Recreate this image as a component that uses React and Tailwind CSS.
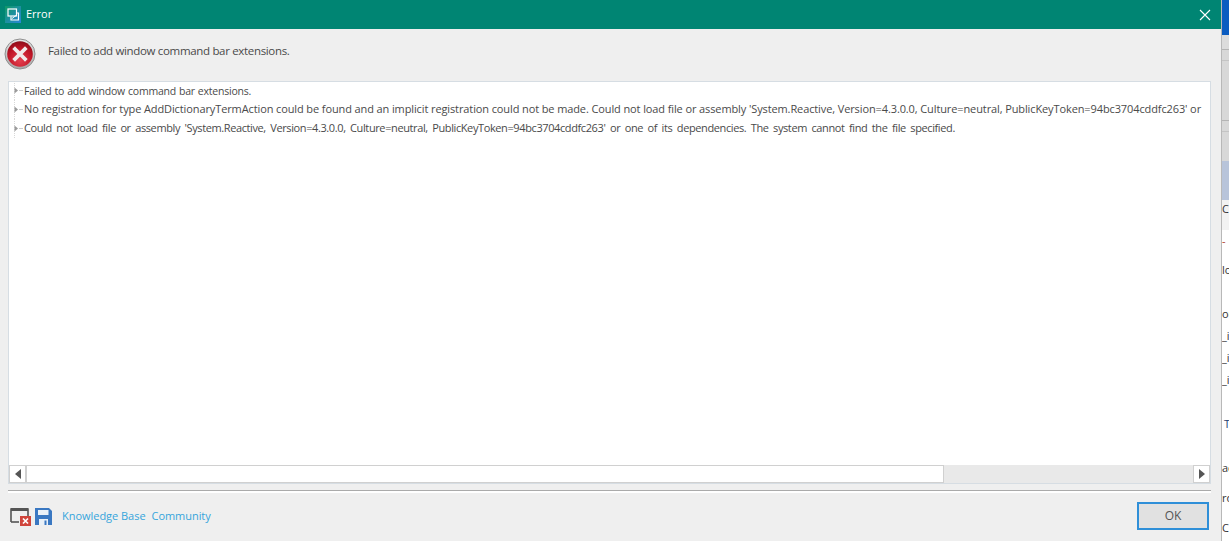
import React from "react";

const FONT = "[font-family:'Open_Sans','Noto_Sans',sans-serif]";

const ROWS = [
  { text: "Failed to add window command bar extensions.", cls: "mt-[2px] text-[10.5px] tracking-[-0.22px] [word-spacing:0.5px]" },
  {
    text: "No registration for type AddDictionaryTermAction could be found and an implicit registration could not be made. Could not load file or assembly 'System.Reactive, Version=4.3.0.0, Culture=neutral, PublicKeyToken=94bc3704cddfc263' or",
    cls: "text-[11px] tracking-[-0.11px]",
  },
  {
    text: "Could not load file or assembly 'System.Reactive, Version=4.3.0.0, Culture=neutral, PublicKeyToken=94bc3704cddfc263' or one of its dependencies. The system cannot find the file specified.",
    cls: "text-[11px] tracking-[-0.39px] [word-spacing:2px]",
  },
];

// slice of the app behind the dialog
const STRIP = [
  { h: "h-[35px]", bg: "bg-[#0b5cc0]" },
  { h: "h-[14px]", bg: "bg-[#dcdcdc]" },
  { h: "h-[11px]", bg: "bg-[#d8d8d8] border-t border-[#b4b4b4]" },
  { h: "h-[60px]", bg: "bg-[#d8d8d8] border-t border-[#c4c4c4]" },
  { h: "h-[11px]", bg: "bg-[#d8d8d8] border-t border-[#b4b4b4]" },
  { h: "h-[30px]", bg: "bg-[#d8d8d8] border-t border-[#c4c4c4]" },
  { h: "h-[39px]", bg: "bg-[#b8c4da]" },
  { h: "h-[16px]", bg: "bg-[#f2f2f2]", t: "C", c: "text-[#333]" },
  { h: "h-[14px]", bg: "bg-[#f2f2f2]" },
  { h: "h-[20px]", bg: "bg-white", t: "-", c: "text-[#b04030]" },
  { h: "h-[9px]", bg: "bg-white" },
  { h: "h-[20px]", bg: "bg-white", t: "lo", c: "text-[#333]" },
  { h: "h-[24px]", bg: "bg-white" },
  { h: "h-[21px]", bg: "bg-white", t: "ou", c: "text-[#333]" },
  { h: "h-[22px]", bg: "bg-white", t: "_ic", c: "text-[#333]" },
  { h: "h-[22px]", bg: "bg-white", t: "_ic", c: "text-[#333]" },
  { h: "h-[22px]", bg: "bg-white", t: "_ic", c: "text-[#333]" },
  { h: "h-[23px]", bg: "bg-white" },
  { h: "h-[20px]", bg: "bg-white", t: "T", c: "text-[#1c3f73] pl-[2px]" },
  { h: "h-[24px]", bg: "bg-white" },
  { h: "h-[20px]", bg: "bg-white", t: "ac", c: "text-[#333]" },
  { h: "h-[10px]", bg: "bg-white" },
  { h: "h-[20px]", bg: "bg-white", t: "rd", c: "text-[#333]" },
  { h: "h-[10px]", bg: "bg-white" },
  { h: "h-[20px]", bg: "bg-white", t: "C", c: "text-[#333]" },
  { h: "h-[4px]", bg: "bg-white" },
];

const AppIcon = () => (
  <svg width="16" height="17" viewBox="0 0 16 17" className="shrink-0">
    <defs>
      <linearGradient id="ai" x1="0" y1="0" x2="1" y2="1">
        <stop offset="0" stopColor="#0f9a66" />
        <stop offset="1" stopColor="#2a86d8" />
      </linearGradient>
    </defs>
    <rect width="16" height="17" fill="url(#ai)" />
    <rect x="3" y="3" width="8.5" height="7" fill="none" stroke="#fff" strokeWidth="1.2" />
    <path d="M6 10.5v3.5h7.5v-7h-2" fill="none" stroke="#fff" strokeWidth="1.2" />
    <path d="M7 12.5l4-3" stroke="#fff" strokeWidth="1" />
  </svg>
);

const ErrorIcon = () => (
  <svg width="32" height="32" viewBox="0 0 32 32" className="shrink-0">
    <defs>
      <radialGradient id="er" cx="0.5" cy="0.75" r="0.75">
        <stop offset="0" stopColor="#e4404f" />
        <stop offset="0.65" stopColor="#bf1526" />
        <stop offset="1" stopColor="#8c0d1a" />
      </radialGradient>
      <linearGradient id="ring" x1="0" y1="0" x2="0" y2="1">
        <stop offset="0" stopColor="#e6e6e6" />
        <stop offset="1" stopColor="#a8a8a8" />
      </linearGradient>
    </defs>
    <circle cx="16" cy="16" r="15" fill="url(#ring)" stroke="#8f8f8f" strokeWidth="1" />
    <circle cx="16" cy="16" r="12.8" fill="url(#er)" />
    <path d="M11 11l10 10M21 11L11 21" stroke="#f1eaea" strokeWidth="3.8" strokeLinecap="square" />
  </svg>
);

const WindowCloseIcon = () => (
  <svg width="21" height="19" viewBox="0 0 21 19" className="shrink-0">
    <path d="M1 15V2h17v7" fill="none" stroke="#555" strokeWidth="1.6" />
    <rect x="1" y="1" width="17" height="3" fill="#555" />
    <path d="M1 15h8" stroke="#555" strokeWidth="1.6" />
    <rect x="10" y="9" width="11" height="10" fill="#d0453c" />
    <path d="M13 11.5l5 5M18 11.5l-5 5" stroke="#fff" strokeWidth="1.7" />
  </svg>
);

const SaveIcon = () => (
  <svg width="17" height="17" viewBox="0 0 17 17" className="shrink-0">
    <path d="M0 0h14l3 3v14H0z" fill="#3a78c2" />
    <rect x="3" y="2" width="10.5" height="5" fill="#eaf1f8" />
    <rect x="4" y="11" width="9" height="6" fill="#eaf1f8" />
    <rect x="9.5" y="12.5" width="2" height="4.5" fill="#3a78c2" />
  </svg>
);

const TreeRow = ({ text, cls }) => (
  <div className="h-[19px] flex items-center whitespace-nowrap">
    <div className="w-[15px] shrink-0 relative h-full">
      <div className="absolute left-[5px] top-0 bottom-0 border-l border-dotted border-[#d8d8d8]" />
      <svg width="5" height="7" viewBox="0 0 5 7" className="absolute left-[5px] top-[6px]">
        <path d="M0.5 0.5L4 3.5L0.5 6.5z" fill="#9a9a9a" />
      </svg>
      <div className="absolute left-[10px] top-[9px] w-[4px] border-t border-[#cccccc]" />
    </div>
    <span className={`text-[#4a4a4a] ${cls}`}>{text}</span>
  </div>
);

const ScrollButton = ({ dir }) => (
  <div className="w-[17px] shrink-0 bg-white border border-[#d0d0d0] flex items-center justify-center">
    <svg width="6" height="10" viewBox="0 0 6 10">
      <path d={dir === "left" ? "M6 0L0 5l6 5z" : "M0 0l6 5-6 5z"} fill="#555" />
    </svg>
  </div>
);

export default function App() {
  return (
    <div className={`flex h-[541px] w-[1229px] overflow-hidden ${FONT}`}>
      {/* DIALOG */}
      <div className="w-[1221px] h-full flex flex-col bg-[#efefef] shrink-0">
        {/* TITLE BAR */}
        <div className="h-[29px] bg-[#008573] flex items-center pl-[5px] pr-[5px] shrink-0">
          <AppIcon />
          <span className="ml-[5px] text-[11px] text-white flex-1">Error</span>
          <svg width="12" height="12" viewBox="0 0 12 12" className="mr-[5px]">
            <path d="M1 1l10 10M11 1L1 11" stroke="#fff" strokeWidth="1.1" />
          </svg>
        </div>

        {/* MESSAGE */}
        <div className="h-[52px] flex items-center pl-[4px] pb-[2px] shrink-0">
          <ErrorIcon />
          <span className="ml-[12px] mb-[6px] text-[11.5px] tracking-[-0.33px] text-[#4a4a4a]">
            Failed to add window command bar extensions.
          </span>
        </div>

        {/* DETAILS */}
        <div className="ml-[8px] w-[1203px] h-[403px] shrink-0 flex flex-col border border-[#d6dde3] bg-white">
          <div className="flex-1 overflow-hidden -mt-[1px]">
            {ROWS.map((row) => (
              <TreeRow key={row.text} text={row.text} cls={row.cls} />
            ))}
          </div>
          <div className="h-[18px] flex bg-[#e9e9e9] shrink-0">
            <ScrollButton dir="left" />
            <div className="w-[918px] bg-white border border-[#d0d0d0]" />
            <div className="flex-1" />
            <ScrollButton dir="right" />
          </div>
        </div>

        {/* SEPARATOR */}
        <div className="ml-[8px] w-[1203px] mt-[6px] border-t border-[#aaaaaa] border-b-2 border-b-white h-[3px] shrink-0" />

        {/* FOOTER */}
        <div className="flex-1 flex items-center pl-[10px] pr-[12px] pb-[2px]">
          <WindowCloseIcon />
          <div className="ml-[4px]">
            <SaveIcon />
          </div>
          <a className="ml-[10px] text-[11px] tracking-[-0.03px] text-[#36a5dc]">Knowledge Base</a>
          <a className="ml-[6px] text-[11px] tracking-[-0.05px] text-[#36a5dc]">Community</a>
          <button className="ml-auto w-[72px] h-[28px] bg-[#e1e1e1] border-2 border-[#2f8fd8] text-[12px] text-[#555]">
            OK
          </button>
        </div>
      </div>

      {/* APP BEHIND */}
      <div className="flex-1 flex flex-col overflow-hidden border-l border-[#b8b8b8]">
        {STRIP.map((s, i) => (
          <div
            key={i}
            className={`${s.h} ${s.bg} shrink-0 text-[11px] leading-none flex items-center whitespace-nowrap overflow-hidden ${s.c || ""}`}
          >
            {s.t}
          </div>
        ))}
      </div>
    </div>
  );
}
